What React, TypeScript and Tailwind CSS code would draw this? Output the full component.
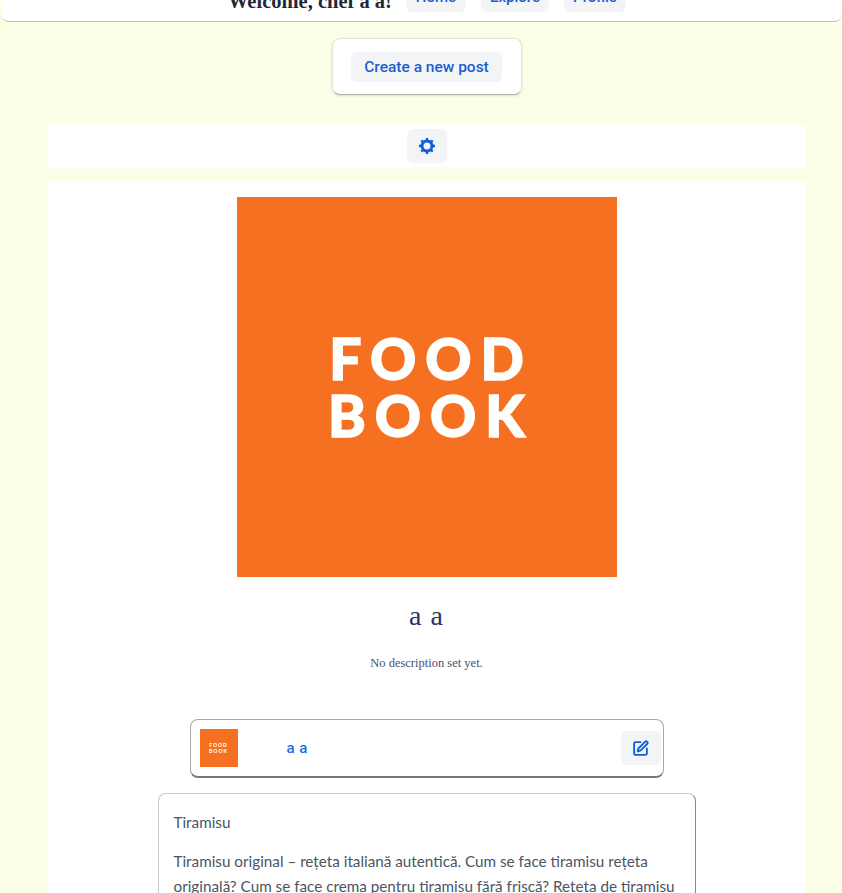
import { SquarePen } from 'lucide-react';

const navItems = [
    { label: 'Home', width: 'w-[60px]' },
    { label: 'Explore', width: 'w-[68px]' },
    { label: 'Profile', width: 'w-[62px]' },
];

function GearIcon() {
    return (
        <svg width="18" height="18" viewBox="0 0 18 18" fill="none" stroke="currentColor">
            <circle cx="9" cy="9" r="5" strokeWidth="3" />
            <path
                d="M9 1v2.5M9 14.5V17M1 9h2.5M14.5 9H17M3.3 3.3l1.8 1.8M12.9 12.9l1.8 1.8M3.3 14.7l1.8-1.8M12.9 5.100l1.8-1.800"
                strokeWidth="2.400"
            />
        </svg>
    );
}

export default function App() {
    return (
        <div className="h-[893px] overflow-hidden bg-[#fcffe8]">
            {/* Header, scrolled mostly out of view */}
            <div className="ml-[1px] flex h-[22px] items-end overflow-hidden rounded-b-lg border-b border-[#c2c2b0] bg-white pb-[9px] pl-[227px]">
                <div className="flex items-center gap-[15px]">
                    <span className="mt-[7px] w-[163px] font-['Liberation_Serif'] text-[20.5px] leading-[20px] font-bold whitespace-nowrap text-[#1f2937]">
                        Welcome, chef a a!
                    </span>
                    {navItems.map((item) => (
                        <div
                            key={item.label}
                            className={`flex h-[30px] items-center justify-center rounded-md bg-[#f3f4f6] font-['Roboto'] text-[15px] font-medium text-[#1a5fd0] ${item.width}`}
                        >
                            {item.label}
                        </div>
                    ))}
                </div>
            </div>

            {/* Create post */}
            <div className="mt-[16px] flex justify-center pl-[11px]">
                <div className="flex h-[57px] w-[190px] items-center justify-center rounded-lg border border-[#e5e5d5] border-b-[#b5b5a5] bg-white shadow-sm">
                    <div className="flex h-[30px] w-[151px] items-center justify-center rounded-md bg-[#f3f4f6] pt-[2px] font-['Roboto'] text-[15.5px] font-medium text-[#1a5fd0]">
                        Create a new post
                    </div>
                </div>
            </div>

            {/* Settings */}
            <div className="mx-[47px] mt-[30px] flex h-[42px] w-[759px] items-start justify-center bg-white pt-[4px]">
                <div className="flex h-[34px] w-[40px] items-center justify-center rounded-md bg-[#f3f4f6] text-[#0f5fdc]">
                    <GearIcon />
                </div>
            </div>

            {/* Profile */}
            <div className="mx-[47px] mt-[15px] flex w-[759px] flex-col items-center bg-white pt-[15px] pb-[20px]">
                <div className="flex h-[380px] w-[380px] flex-col items-center justify-center bg-[#f57020] font-['Lato'] text-[57px] leading-[57px] font-black tracking-[9px] text-white [-webkit-text-stroke:1.5px_white]">
                    <span className="pl-[9px]">FOOD</span>
                    <span className="pl-[9px]">BOOK</span>
                </div>

                <h1 className="mt-[24px] font-['Liberation_Serif'] text-[28px] leading-[30px] tracking-[1px] text-[#2b3468]">a a</h1>
                <p className="mt-[24px] font-['Liberation_Serif'] text-[12.5px] leading-[16px] text-[#4b5070]">No description set yet.</p>

                <div className="mt-[48px] flex h-[59px] w-[474px] items-center rounded-lg border border-[#a8a8a8] border-b-2 border-b-[#777777] pr-[2px] pl-[9px]">
                    <div className="flex h-[38px] w-[38px] flex-col items-center justify-center bg-[#f57020] font-['Lato'] text-[5px] leading-[6px] font-black tracking-[1px] text-white">
                        <span>FOOD</span>
                        <span>BOOK</span>
                    </div>
                    <span className="ml-[49px] flex-1 pt-[1px] font-['Roboto'] text-[15px] font-medium tracking-[0.5px] text-[#1a6fe0]">a a</span>
                    <div className="flex h-[34px] w-[40px] items-center justify-center rounded-md bg-[#f3f4f6] text-[#0f5fdc]">
                        <SquarePen size={17} strokeWidth={2.6} />
                    </div>
                </div>

                <div className="mt-[15px] w-[538px] rounded-lg border border-[#c8c8c8] border-r-[#888888] p-[15px] pt-[16px] font-['Lato'] text-[15.25px] leading-[25px] text-[#4b5563]">
                    <p>Tiramisu</p>
                    <p className="mt-[14px]">
                        Tiramisu original – rețeta italiană autentică. Cum se face tiramisu rețeta originală? Cum se face crema pentru tiramisu fără frișcă? Reteta de tiramisu
                    </p>
                </div>
            </div>
        </div>
    );
}
